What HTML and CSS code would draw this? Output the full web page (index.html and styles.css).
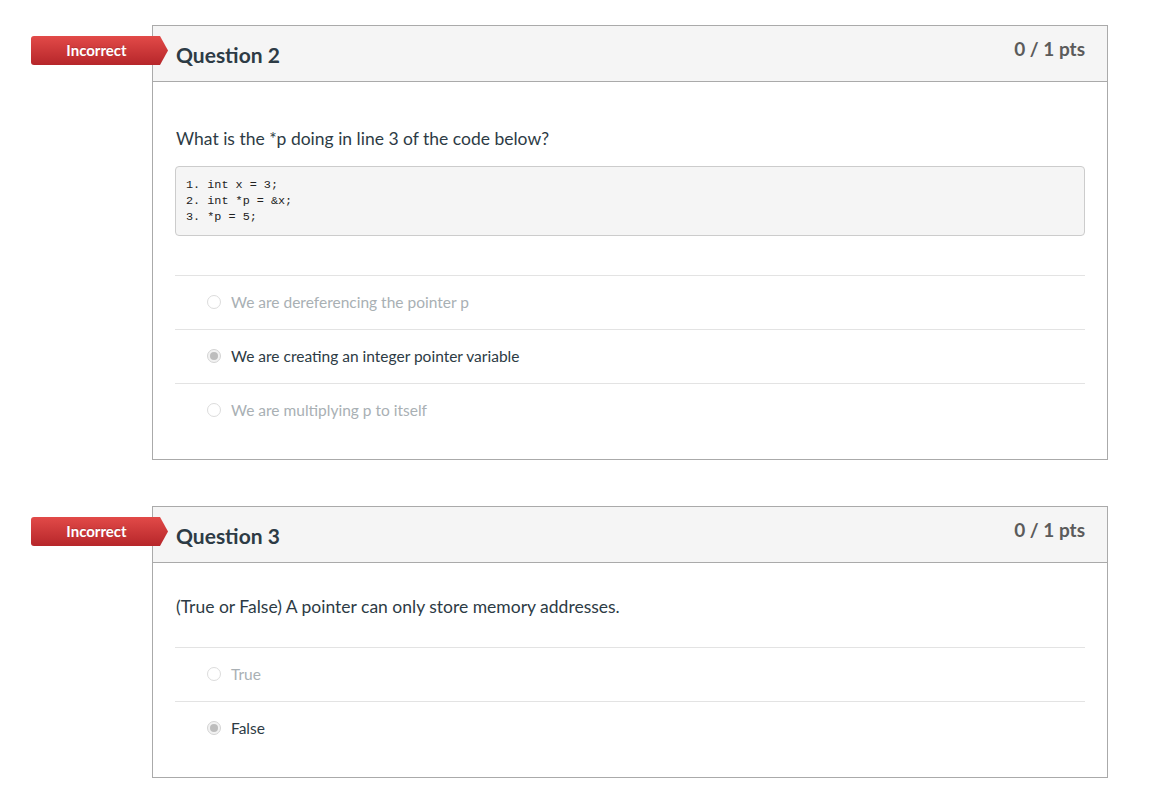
FILE: index.html
```html
<!DOCTYPE html>
<html>
<head>
<meta charset="utf-8">
<link rel="stylesheet" href="styles.css">
</head>
<body>
<div class="page">
  <div class="question">
    <div class="badge">Incorrect</div>
    <div class="q-header">
      <div class="q-name">Question 2</div>
      <div class="q-pts">0 / 1 pts</div>
    </div>
    <div class="q-body q-body-first">
      <p class="q-text">What is the *p doing in line 3 of the code below?</p>
      <pre class="code">1. int x = 3;
2. int *p = &amp;x;
3. *p = 5;</pre>
      <div class="answers answers-after-code">
        <div class="answer"><span class="radio"></span><span class="a-text">We are dereferencing the pointer p</span></div>
        <div class="answer selected"><span class="radio"></span><span class="a-text">We are creating an integer pointer variable</span></div>
        <div class="answer"><span class="radio"></span><span class="a-text">We are multiplying p to itself</span></div>
      </div>
    </div>
  </div>

  <div class="question">
    <div class="badge">Incorrect</div>
    <div class="q-header">
      <div class="q-name">Question 3</div>
      <div class="q-pts">0 / 1 pts</div>
    </div>
    <div class="q-body q-body-second">
      <p class="q-text">(True or False) A pointer can only store memory addresses.</p>
      <div class="answers answers-after-text">
        <div class="answer"><span class="radio"></span><span class="a-text">True</span></div>
        <div class="answer selected"><span class="radio"></span><span class="a-text">False</span></div>
      </div>
    </div>
  </div>
</div>
</body>
</html>
```
FILE: styles.css
```css
html, body {
  margin: 0;
  padding: 0;
  background: #ffffff;
}

body {
  font-family: Lato, "Open Sans", "Liberation Sans", sans-serif;
  color: #2d3b45;
}

.page {
  padding-top: 25px;
  padding-left: 152px;
  width: 956px;
}

.question {
  position: relative;
  border: 1px solid #aaaaaa;
  margin-bottom: 46px;
  background: #ffffff;
}

.badge {
  position: absolute;
  left: -122px;
  top: 10px;
  width: 137px;
  height: 29px;
  box-sizing: border-box;
  padding-right: 6px;
  padding-bottom: 2px;
  display: flex;
  align-items: center;
  justify-content: center;
  color: #ffffff;
  font-size: 15px;
  font-weight: 700;
  background: linear-gradient(#e24a48, #b6262a);
  border-radius: 3px 0 0 3px;
  clip-path: polygon(0 0, calc(100% - 8px) 0, 100% 50%, calc(100% - 8px) 100%, 0 100%);
  text-shadow: 0 -1px 0 rgba(0,0,0,0.15);
}

.q-header {
  display: flex;
  justify-content: space-between;
  align-items: flex-start;
  height: 55px;
  background: #f5f5f5;
  border-bottom: 1px solid #aaaaaa;
  padding: 0 22px 0 23px;
}

.q-name {
  padding-top: 16px;
  font-size: 21px;
  font-weight: 700;
  line-height: 26px;
  color: #2d3b45;
}

.q-pts {
  padding-top: 11px;
  font-size: 19px;
  font-weight: 700;
  line-height: 24px;
  color: #5b5b5b;
}

.q-body {
  padding: 0 22px 22px 22px;
}

.q-body-first {
  padding-top: 45px;
}

.q-body-second {
  padding-top: 32px;
}

.q-text {
  margin: 0 0 0 1px;
  font-size: 17.5px;
  line-height: 24px;
  color: #2d3b45;
}

.code {
  margin: 15px 0 0 0;
  padding: 10px 10px;
  background: #f5f5f5;
  border: 1px solid #cccccc;
  border-radius: 4px;
  font-family: "Liberation Mono", "DejaVu Sans Mono", monospace;
  font-size: 11.8px;
  line-height: 16px;
  color: #222222;
}

.answers-after-code {
  margin-top: 39px;
}

.answers-after-text {
  margin-top: 28px;
}

.answer {
  display: flex;
  align-items: center;
  height: 53px;
  box-sizing: border-box;
  height: 54px;
  padding-bottom: 2px;
  border-top: 1px solid #e3e3e3;
  padding-left: 32px;
  font-size: 15.5px;
  color: #a9b0b4;
}

.answer.selected {
  color: #2d3b45;
}

.radio {
  width: 12px;
  height: 12px;
  border-radius: 50%;
  border: 1px solid #dcdcdc;
  background: #ffffff;
  margin-right: 10px;
  position: relative;
  flex: none;
}

.answer.selected .radio {
  border-color: #d4d4d4;
  background: #f2f2f2;
}

.answer.selected .radio::after {
  content: "";
  position: absolute;
  left: 2px;
  top: 2px;
  width: 8px;
  height: 8px;
  border-radius: 50%;
  background: #bdbdbd;
}

.a-text {
  line-height: 18px;
}
```
